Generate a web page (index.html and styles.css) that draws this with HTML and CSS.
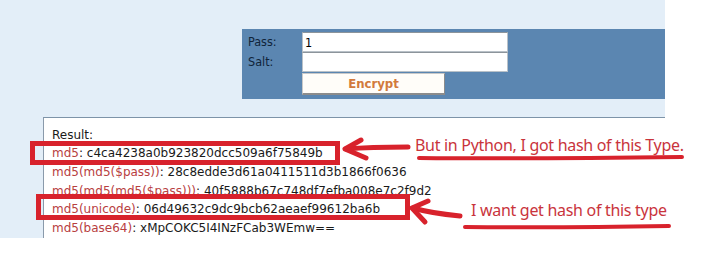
FILE: index.html
```html
<!DOCTYPE html>
<html>
<head>
<meta charset="utf-8">
<link rel="stylesheet" href="styles.css">
</head>
<body>
<div class="page">
  <div class="canvas">
    <form class="panel">
      <div class="labels">
        <div class="label">Pass:</div>
        <div class="label">Salt:</div>
      </div>
      <div class="fields">
        <input class="field" type="text" value="1">
        <input class="field" type="text" value="">
        <button class="btn" type="button">Encrypt</button>
      </div>
    </form>
    <div class="result">
      <div class="row">Result:</div>
      <div class="row"><span class="k">md5</span>: c4ca4238a0b923820dcc509a6f75849b</div>
      <div class="row"><span class="k">md5(md5($pass))</span>: 28c8edde3d61a0411511d3b1866f0636</div>
      <div class="row"><span class="k">md5(md5(md5($pass)))</span>: 40f5888b67c748df7efba008e7c2f9d2</div>
      <div class="row"><span class="k">md5(unicode)</span>: 06d49632c9dc9bcb62aeaef99612ba6b</div>
      <div class="row"><span class="k">md5(base64)</span>: xMpCOKC5I4INzFCab3WEmw==</div>
    </div>
  </div>
  <svg class="marks" width="708" height="271" viewBox="0 0 708 271">
    <g fill="none" stroke="#d8222c" stroke-linecap="round" stroke-linejoin="round">
      <rect x="32.5" y="143.5" width="305" height="19" stroke-width="5" stroke-linecap="butt" stroke-linejoin="miter"/>
      <rect x="38.5" y="196.5" width="369" height="21" stroke-width="5" stroke-linecap="butt" stroke-linejoin="miter"/>
      <path d="M346 149 Q 370 147 408 147" stroke-width="5"/>
      <path d="M361 140 L 345 149 L 366 158" stroke-width="5"/>
      <path d="M419 158 Q 520 159 682 157" stroke-width="4"/>
      <path d="M413 208 Q 430 213 460 216" stroke-width="5"/>
      <path d="M428 201 L 412 208 L 425 222" stroke-width="5"/>
      <path d="M465 227 Q 560 228 669 226" stroke-width="4"/>
    </g>
  </svg>
  <span class="note note1">But in Python, I got hash of this Type.</span>
  <span class="note note2">I want get hash of this type</span>
</div>
</body>
</html>
```

FILE: styles.css
```css
html, body {
  margin: 0;
  padding: 0;
  background: #ffffff;
}
.page {
  position: relative;
  width: 708px;
  height: 271px;
  overflow: hidden;
  font-family: "DejaVu Sans", Verdana, sans-serif;
}
.canvas {
  width: 665px;
  height: 238px;
  background: #e3eef8;
  padding-top: 29px;
  box-sizing: border-box;
  display: flex;
  flex-direction: column;
}
.panel {
  margin: 0 0 0 242px;
  height: 70px;
  background: #5b86b1;
  display: flex;
  padding: 3px 0 0 0;
  box-sizing: border-box;
}
.labels {
  width: 60px;
  padding-left: 6px;
  box-sizing: border-box;
}
.label {
  height: 20px;
  line-height: 19px;
  font-size: 12.5px;
  font-family: "DejaVu Sans Condensed", "DejaVu Sans", sans-serif;
  color: #10243a;
}
.fields {
  display: flex;
  flex-direction: column;
  align-items: flex-start;
}
.field {
  width: 206px;
  height: 20px;
  margin: 0;
  padding: 0 2px;
  box-sizing: border-box;
  border: 1px solid #b9c1c8;
  border-top-color: #8c949b;
  background: #ffffff;
  font-family: "DejaVu Sans Condensed", "DejaVu Sans", sans-serif;
  font-size: 12.5px;
  color: #000;
  outline: none;
}
.btn {
  margin-top: 1px;
  width: 143px;
  height: 22px;
  box-sizing: border-box;
  background: #fffdf9;
  border: 1px solid #c9c9c9;
  border-right-color: #8c8c8c;
  border-bottom: 2px solid #8c8c8c;
  font-family: "DejaVu Sans Condensed", "DejaVu Sans", sans-serif;
  font-weight: bold;
  font-size: 13px;
  color: #d27a3c;
  padding: 0;
}
.result {
  margin: 18px 0 0 43px;
  flex: 1;
  background: #ffffff;
  border-top: 1px solid #7d93a8;
  border-left: 1px solid #8a9aab;
  padding: 7.5px 0 0 8px;
  font-size: 12px;
  color: #1a1a1a;
}
.row {
  height: 18.7px;
  line-height: 18.7px;
  white-space: nowrap;
}
.k {
  color: #b8403f;
}
.marks {
  position: absolute;
  left: 0;
  top: 0;
}
.note {
  position: absolute;
  font-family: "Noto Sans", sans-serif;
  font-size: 16px;
  color: #c9343c;
  white-space: nowrap;
  letter-spacing: -0.3px;
}
.note1 {
  left: 415px;
  top: 134px;
}
.note2 {
  left: 471px;
  top: 199px;
}
```
